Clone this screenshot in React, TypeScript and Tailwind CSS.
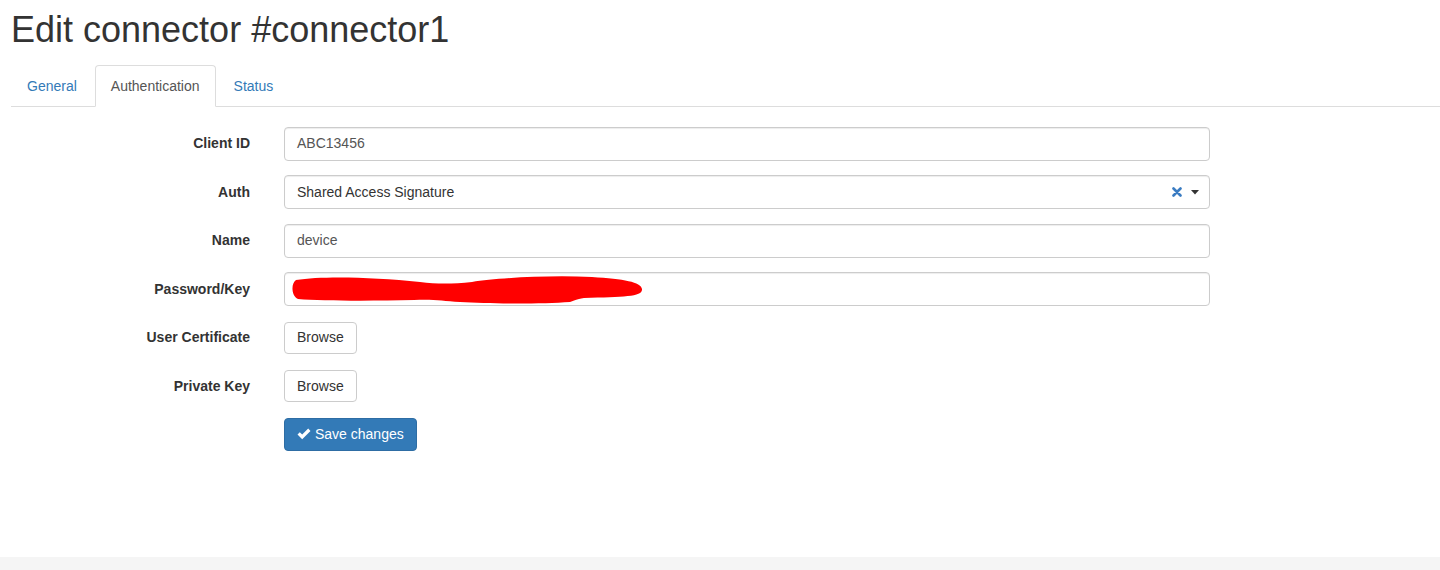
import React from 'react';

const labelCls = 'w-[239px] shrink-0 text-right font-bold text-[#333]';
const inputCls =
  'ml-[34px] w-[926px] h-[34px] border border-[#ccc] rounded-[4px] px-[12px] text-[14px] text-[#555] shadow-[inset_0_1px_1px_rgba(0,0,0,0.075)] flex items-center';

function Tabs() {
  const tabs = ['General', 'Authentication', 'Status'];
  return (
    <ul className="mt-[15px] flex border-b border-[#ddd]">
      {tabs.map((t) => {
        const active = t === 'Authentication';
        return (
          <li key={t} className="-mb-px">
            <a
              className={`block mr-[2px] px-[15px] py-[10px] leading-[20px] border rounded-t-[4px] cursor-pointer ${
                active
                  ? 'border-[#ddd] border-b-white bg-white text-[#555]'
                  : 'border-transparent text-[#337ab7]'
              }`}
            >
              {t}
            </a>
          </li>
        );
      })}
    </ul>
  );
}

function Scribble() {
  return (
    <svg width="352" height="30" viewBox="0 0 352 30" className="absolute left-[7px] top-[2px]">
      <path
        fill="#ff0000"
        d="M4,5 C30,1 80,2 128,7 C145,9 160,9 180,7 C205,3 255,0 300,2 C332,4 349,7 350,14 C351,22 332,22 292,23 C284,24 282,26 278,27 C250,29 200,29 168,27 C150,26 142,24 122,25 C80,26 30,26 6,24 C-1,21 -1,8 4,5 Z"
      />
    </svg>
  );
}

export default function App() {
  return (
    <div className="h-[570px] flex flex-col bg-white font-['Liberation_Sans',Arial,sans-serif] text-[14px] text-[#333] overflow-hidden">
      <div className="flex-1 pl-[11px]">
        <h1 className="mt-[10px] text-[36px] leading-[1.1] font-medium text-[#333]">
          Edit connector #connector1
        </h1>
        <Tabs />

        <form className="mt-[20px] flex flex-col gap-[14.5px]">
          <div className="flex items-center h-[34px]">
            <label className={labelCls}>Client ID</label>
            <div className={inputCls}>ABC13456</div>
          </div>

          <div className="flex items-center h-[34px]">
            <label className={labelCls}>Auth</label>
            <div className={`${inputCls} justify-between !text-[#333]`}>
              <span>Shared Access Signature</span>
              <span className="flex items-center gap-[9px] mr-[-2px]">
                <svg width="10" height="10" viewBox="0 0 10 10">
                  <path d="M1.5,1.5 L8.5,8.5 M8.5,1.5 L1.5,8.5" stroke="#3a7cc2" strokeWidth="2.6" strokeLinecap="round" />
                </svg>
                <svg width="8" height="5" viewBox="0 0 8 5">
                  <path d="M0,0 L8,0 L4,4.5 Z" fill="#333" />
                </svg>
              </span>
            </div>
          </div>

          <div className="flex items-center h-[34px]">
            <label className={labelCls}>Name</label>
            <div className={inputCls}>device</div>
          </div>

          <div className="flex items-center h-[34px]">
            <label className={labelCls}>Password/Key</label>
            <div className={`${inputCls} relative`}>
              <Scribble />
            </div>
          </div>

          <div className="flex items-center h-[34px]">
            <label className={labelCls}>User Certificate</label>
            <button
              type="button"
              className="ml-[34px] h-[32px] px-[12px] border border-[#ccc] rounded-[4px] bg-white text-[#333]"
            >
              Browse
            </button>
          </div>

          <div className="flex items-center h-[34px]">
            <label className={labelCls}>Private Key</label>
            <button
              type="button"
              className="ml-[34px] h-[32px] px-[12px] border border-[#ccc] rounded-[4px] bg-white text-[#333]"
            >
              Browse
            </button>
          </div>

          <div className="flex items-start h-[34px]">
            <div className="w-[239px] shrink-0" />
            <button
              type="button"
              className="ml-[34px] h-[33px] px-[12px] flex items-center gap-[4px] border border-[#2e6da4] rounded-[4px] bg-[#337ab7] text-white"
            >
              <svg width="14" height="12" viewBox="0 0 14 12">
                <path d="M0.5,6.5 L2.8,4.2 L5.2,6.6 L11.2,0.6 L13.5,2.9 L5.2,11.2 Z" fill="#fff" />
              </svg>
              Save changes
            </button>
          </div>
        </form>
      </div>
      <div className="h-[13px] shrink-0 bg-[#f5f5f5]" />
    </div>
  );
}
